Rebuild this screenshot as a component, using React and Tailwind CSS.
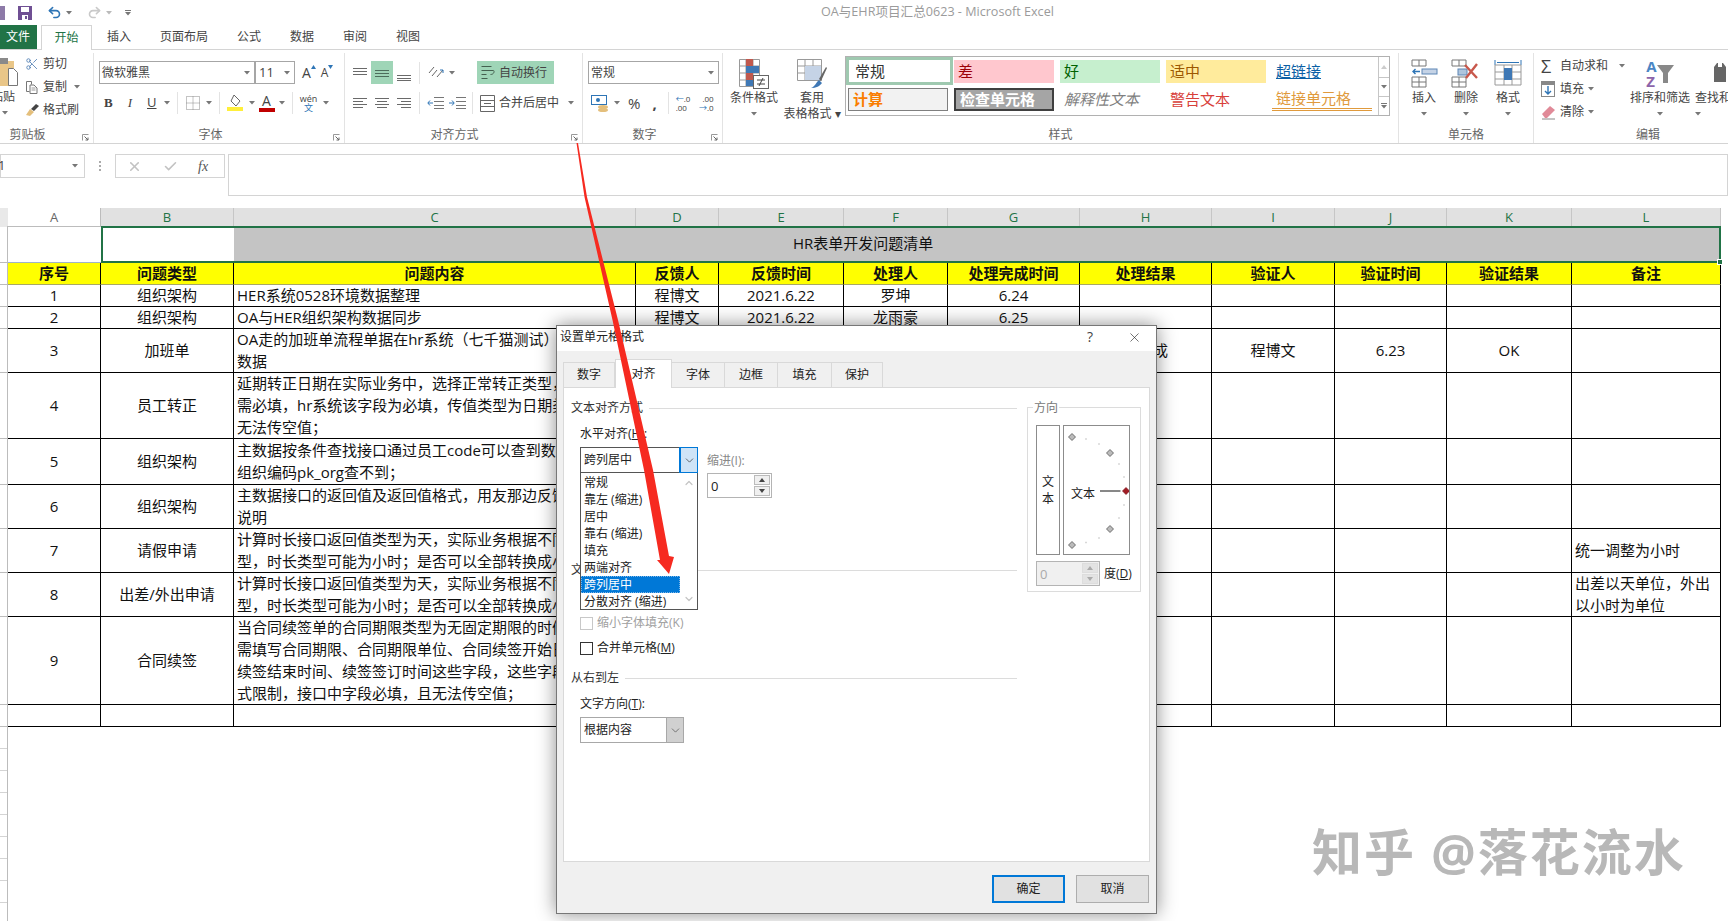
import { Scissors, Undo2, Redo2, X, Check, ChevronDown, ChevronUp } from 'lucide-react'

const GRID = 'grid grid-cols-[8px_93px_133px_402px_83px_125px_104px_132px_132px_123px_112px_125px_149px_7px]'

const COLS = ['A', 'B', 'C', 'D', 'E', 'F', 'G', 'H', 'I', 'J', 'K', 'L']
const HEADERS = ['序号', '问题类型', '问题内容', '反馈人', '反馈时间', '处理人', '处理完成时间', '处理结果', '验证人', '验证时间', '验证结果', '备注']

const CONTRACT_LINES = ['计算时长接口返回值类型为天，实际业务根据不同', '型，时长类型可能为小时；是否可以全部转换成小']

const ROWS = [
  { h: 'h-[22px]', no: '1', type: '组织架构', lines: ['HER系统0528环境数据整理'], d: '程博文', e: '2021.6.22', f: '罗坤', g: '6.24' },
  { h: 'h-[22px]', no: '2', type: '组织架构', lines: ['OA与HER组织架构数据同步'], d: '程博文', e: '2021.6.22', f: '龙雨豪', g: '6.25' },
  { h: 'h-[44px]', no: '3', type: '加班单', lines: ['OA走的加班单流程单据在hr系统（七千猫测试）', '数据'], h2: '已完成', i: '程博文', j: '6.23', k: 'OK' },
  { h: 'h-[66px]', no: '4', type: '员工转正', lines: ['延期转正日期在实际业务中，选择正常转正类型，', '需必填，hr系统该字段为必填，传值类型为日期类', '无法传空值；'] },
  { h: 'h-[46px]', no: '5', type: '组织架构', lines: ['主数据按条件查找接口通过员工code可以查到数据', '组织编码pk_org查不到；'] },
  { h: 'h-[44px]', no: '6', type: '组织架构', lines: ['主数据接口的返回值及返回值格式，用友那边反馈', '说明'] },
  { h: 'h-[44px]', no: '7', type: '请假申请', lines: CONTRACT_LINES, l: ['统一调整为小时'] },
  { h: 'h-[44px]', no: '8', type: '出差/外出申请', lines: CONTRACT_LINES, l: ['出差以天单位，外出', '以小时为单位'] },
  { h: 'h-[88px]', no: '9', type: '合同续签', lines: ['当合同续签单的合同期限类型为无固定期限的时候', '需填写合同期限、合同期限单位、合同续签开始日', '续签结束时间、续签签订时间这些字段，这些字段', '式限制，接口中字段必填，且无法传空值；'] },
  { h: 'h-[22px]', no: '', type: '', lines: [] },
]

const ALIGN_ITEMS = ['常规', '靠左 (缩进)', '居中', '靠右 (缩进)', '填充', '两端对齐', '跨列居中', '分散对齐 (缩进)']

function Caret({ className = '' }) {
  return (
    <svg width="6" height="4" viewBox="0 0 6 4" className={`shrink-0 ${className}`}>
      <path d="M0 0h6L3 3.5z" fill="#777" />
    </svg>
  )
}

function Launcher() {
  return (
    <svg width="7" height="7" viewBox="0 0 7 7" className="absolute right-[4px] bottom-[2px]">
      <path d="M.5 6.5v-6h6" fill="none" stroke="#999" />
      <path d="M2.5 2.5l3.5 3.5M6 3.5V6H3.5" fill="none" stroke="#666" />
    </svg>
  )
}

function Lines({ rows, size = 16, color = '#6a6a6a' }) {
  return (
    <svg width={size} height={size} viewBox={`0 0 ${size} ${size}`} className="shrink-0">
      {rows.map(([x1, x2, y], i) => (
        <path key={i} d={`M${x1} ${y}H${x2}`} stroke={color} />
      ))}
    </svg>
  )
}

function Group({ className, labelClass = '', label, launcher, children }) {
  return (
    <div className={`relative flex h-[90px] shrink-0 flex-col border-r border-[#e3e3e3] ${className}`}>
      <div className="h-[74px] pt-px">{children}</div>
      <div className={`h-[16px] text-center text-[12px] leading-[16px] whitespace-nowrap text-[#666] ${labelClass}`}>{label}</div>
      {launcher && <Launcher />}
    </div>
  )
}

function BigButton({ className, icon, lines }) {
  return (
    <div className={`flex shrink-0 flex-col items-center pt-[5px] text-[12px] leading-[16px] text-[#444] ${className}`}>
      <div className="flex h-[31px] items-start justify-center">{icon}</div>
      {lines.map((t) => (
        <div key={t} className="whitespace-nowrap">{t}</div>
      ))}
      {lines.length === 1 && <Caret className="mt-[6px]" />}
    </div>
  )
}

function StyleCell({ className, children }) {
  return <div className={`flex h-[23px] w-[100px] items-center pl-[4px] text-[15px] whitespace-nowrap ${className}`}>{children}</div>
}

function Ribbon() {
  return (
    <div className="flex h-[94px] shrink-0 border-b border-[#d4d4d4] bg-white pt-[3px]">
      {/* Clipboard, cut off by the left edge of the picture */}
      <Group className="w-[94px]" labelClass="pr-[38px]" label="剪贴板" launcher>
        <div className="flex h-full">
          <div className="flex w-[25px] flex-col items-start pt-[4px]">
            <svg width="18" height="30" viewBox="0 0 18 30">
              <rect x="-8" y="3" width="22" height="25" fill="#e9c688" />
              <rect x="-2" y="0" width="10" height="6" fill="#8a8a8a" />
              <path d="M8.5 10.5h5l4 4v13h-9z" fill="#fff" stroke="#777" />
            </svg>
            <div className="mt-[2px] w-[15px] overflow-hidden text-[12px] leading-[14px] whitespace-nowrap text-[#444]">
              <span className="float-right">粘贴</span>
            </div>
            <Caret className="mt-[7px] ml-[2px]" />
          </div>
          <div className="flex flex-col gap-[7px] pt-[2px] text-[12px] leading-[16px] text-[#444]">
            <div className="flex items-center gap-[4px]"><Scissors size={14} color="#4b7bb0" strokeWidth={1.4} className="-scale-y-100" />剪切</div>
            <div className="flex items-center gap-[4px]">
              <svg width="14" height="14" viewBox="0 0 14 14"><path d="M1.5 1.5h5v3M1.5 1.5v10h3M5 5h4l3 3v5.5H5z" fill="none" stroke="#777" /><path d="M6.5 8h4M6.5 10h4" stroke="#999" /></svg>
              复制<Caret className="ml-[3px]" />
            </div>
            <div className="flex items-center gap-[2px]">
              <svg width="16" height="14" viewBox="0 0 16 14"><path d="M1 12l4-6 4 3-4 4z" fill="#e4bf7c" /><path d="M6 6l5-5 3 2-5 5z" fill="#444" /></svg>
              格式刷
            </div>
          </div>
        </div>
      </Group>

      {/* Font */}
      <Group className="w-[251px]" labelClass="pr-[17px]" label="字体" launcher>
        <div className="flex flex-col pt-[7px] pl-[5px] text-[#444]">
          <div className="flex items-center">
            <div className="flex h-[23px] w-[196px] items-center border border-[#a6a6a6] text-[12px]">
              <div className="flex h-full w-[156px] items-center justify-between border-r-2 border-[#a6a6a6] pr-[4px] pl-[2px]">微软雅黑<Caret /></div>
              <div className="flex flex-1 items-center justify-between pr-[4px] pl-[3px] text-[13px]">11<Caret /></div>
            </div>
            <div className="ml-[7px] flex items-start text-[14px] leading-[16px]">A<svg width="5" height="4" viewBox="0 0 5 4"><path d="M0 4L2.5 0 5 4z" fill="#2e75b6" /></svg></div>
            <div className="ml-[5px] flex items-start text-[12px] leading-[16px]">A<svg width="5" height="4" viewBox="0 0 5 4"><path d="M0 0h5L2.5 4z" fill="#2e75b6" /></svg></div>
          </div>
          <div className="mt-[8px] flex h-[22px] items-center text-[13px]">
            <span className="ml-[5px] font-bold [font-family:'Liberation_Serif',serif]">B</span>
            <span className="ml-[15px] italic [font-family:'Liberation_Serif',serif]">I</span>
            <span className="ml-[15px] underline">U</span>
            <Caret className="ml-[7px]" />
            <div className="ml-[7px] h-[22px] w-px bg-[#e3e3e3]" />
            <svg width="14" height="14" viewBox="0 0 14 14" className="ml-[8px]"><path d="M.5.5h13v13H.5zM7 .5v13M.5 7h13" fill="none" stroke="#888" strokeDasharray="1 1" /></svg>
            <Caret className="ml-[6px]" />
            <div className="ml-[7px] h-[22px] w-px bg-[#e3e3e3]" />
            <svg width="17" height="18" viewBox="0 0 17 18" className="ml-[7px]"><path d="M7 1l6 6-4 5-5-5z" fill="#fff" stroke="#666" /><rect y="13" width="16" height="4" fill="#ffef3a" /></svg>
            <Caret className="ml-[5px]" />
            <div className="ml-[4px] flex w-[16px] flex-col items-center text-[14px] leading-[14px]">
              <span>A</span>
              <span className="h-[4px] w-[16px] bg-[#c00000]" />
            </div>
            <Caret className="ml-[4px]" />
            <div className="ml-[7px] h-[22px] w-px bg-[#e3e3e3]" />
            <div className="ml-[7px] flex w-[18px] flex-col items-center leading-[9px]">
              <span className="text-[9px]">wén</span>
              <span className="text-[9px] text-[#2e75b6]">文</span>
            </div>
            <Caret className="ml-[5px]" />
          </div>
        </div>
      </Group>

      {/* Alignment */}
      <Group className="w-[238px]" labelClass="pr-[18px]" label="对齐方式" launcher>
        <div className="flex flex-col pt-[7px] pl-[7px] text-[12px] text-[#444]">
          <div className="flex h-[23px] items-center">
            <Lines rows={[[1, 15, 3.5], [1, 15, 6.5], [1, 15, 9.5]]} />
            <div className="ml-[3px] flex h-[23px] w-[22px] items-center justify-center bg-[#9fd5b7]"><Lines rows={[[1, 15, 5.5], [1, 15, 8.5], [1, 15, 11.5]]} color="#4d6e5c" /></div>
            <div className="ml-[3px]"><Lines rows={[[1, 15, 10.5], [1, 15, 13.5], [1, 15, 15.5]]} /></div>
            <div className="ml-[7px] h-[22px] w-px bg-[#e3e3e3]" />
            <svg width="18" height="16" viewBox="0 0 18 16" className="ml-[7px]"><path d="M2 8l5-6M5 11l5-6M10 12l6-7" stroke="#666" fill="none" /><path d="M13 5h3v3" stroke="#2e75b6" fill="none" /></svg>
            <Caret className="ml-[4px]" />
            <div className="ml-[22px] flex h-[23px] w-[77px] items-center gap-[4px] bg-[#9fd5b7] pl-[3px] whitespace-nowrap">
              <svg width="15" height="16" viewBox="0 0 15 16"><path d="M1.5 1.5h10M1.5 5.5h12c1 0 1 4-3 4M1.5 9.5h5M1.5 13.5h6" stroke="#44604f" fill="none" /></svg>
              自动换行
            </div>
          </div>
          <div className="mt-[8px] flex h-[22px] items-center">
            <Lines rows={[[1, 15, 3.5], [1, 11, 6.5], [1, 15, 9.5], [1, 11, 12.5]]} />
            <div className="ml-[6px]"><Lines rows={[[1, 15, 3.5], [3, 13, 6.5], [1, 15, 9.5], [3, 13, 12.5]]} /></div>
            <div className="ml-[6px]"><Lines rows={[[1, 15, 3.5], [5, 15, 6.5], [1, 15, 9.5], [5, 15, 12.5]]} /></div>
            <div className="ml-[7px] h-[22px] w-px bg-[#e3e3e3]" />
            <svg width="17" height="14" viewBox="0 0 17 14" className="ml-[7px]"><path d="M7 1.5h10M7 5.5h10M7 9.5h10M7 12.5h10" stroke="#777" /><path d="M6 7H1M3 4.5L.8 7 3 9.5" stroke="#2e75b6" fill="none" /></svg>
            <svg width="17" height="14" viewBox="0 0 17 14" className="ml-[5px]"><path d="M7 1.5h10M7 5.5h10M7 9.5h10M7 12.5h10" stroke="#777" /><path d="M0 7h5M3 4.5L5.2 7 3 9.5" stroke="#2e75b6" fill="none" /></svg>
            <div className="ml-[6px] h-[22px] w-px bg-[#e3e3e3]" />
            <svg width="15" height="17" viewBox="0 0 15 17" className="ml-[7px]"><path d="M.5.5h14v16H.5zM.5 5.5h14M.5 11.5h14M4 8.5h7" fill="none" stroke="#666" /></svg>
            <span className="ml-[4px] whitespace-nowrap">合并后居中</span>
            <Caret className="ml-[9px]" />
          </div>
        </div>
      </Group>

      {/* Number */}
      <Group className="w-[140px]" labelClass="pr-[16px]" label="数字" launcher>
        <div className="flex flex-col pt-[7px] pl-[5px] text-[12px] text-[#444]">
          <div className="flex h-[23px] w-[131px] items-center justify-between border border-[#a6a6a6] pr-[4px] pl-[2px]">常规<Caret /></div>
          <div className="mt-[8px] flex h-[22px] items-center">
            <svg width="18" height="17" viewBox="0 0 18 17" className="ml-[3px]"><rect x=".5" y=".5" width="15" height="9" fill="#fff" stroke="#2e75b6" /><circle cx="7" cy="5" r="2" fill="#2e75b6" /><ellipse cx="12" cy="12" rx="5" ry="2" fill="#e4bf7c" /><ellipse cx="12" cy="15" rx="5" ry="2" fill="#e4bf7c" /></svg>
            <Caret className="ml-[5px]" />
            <span className="ml-[8px] text-[15px]">%</span>
            <span className="ml-[12px] text-[15px] font-bold">,</span>
            <div className="ml-[11px] h-[22px] w-px bg-[#e3e3e3]" />
            <div className="ml-[7px] flex w-[16px] flex-col text-[8px] leading-[9px]"><span><span className="text-[#2e75b6]">←</span>.0</span><span>.00</span></div>
            <div className="ml-[6px] flex w-[16px] flex-col text-right text-[8px] leading-[9px]"><span>.00</span><span><span className="text-[#2e75b6]">→</span>.0</span></div>
          </div>
        </div>
      </Group>

      {/* Styles */}
      <Group className="w-[676px]" label="样式">
        <div className="flex">
          <BigButton
            className="ml-[5px] w-[52px]"
            lines={['条件格式']}
            icon={
              <svg width="30" height="30" viewBox="0 0 30 30">
                <path d="M.5.5h20v27H.5zM7 .5v27M14 .5v27M.5 7h20M.5 14h20M.5 21h20" fill="none" stroke="#999" />
                <rect x="7" y="0" width="7" height="7" fill="#c0584d" />
                <rect x="7" y="7" width="13" height="7" fill="#3f78b5" />
                <rect x="7" y="14" width="7" height="7" fill="#c0584d" />
                <rect x="7" y="21" width="7" height="6" fill="#3f78b5" />
                <rect x="14.5" y="16.5" width="15" height="13" fill="#fff" stroke="#666" />
                <path d="M18 21h8M18 25h8M24 19l-4 8" stroke="#444" fill="none" />
              </svg>
            }
          />
          <BigButton
            className="ml-[3px] w-[58px]"
            lines={['套用', '表格格式 ▾']}
            icon={
              <svg width="30" height="30" viewBox="0 0 30 30">
                <path d="M.5.5h24v21H.5zM.5 7h24M.5 14h24M8 .5v21M16 .5v21" fill="none" stroke="#999" />
                <rect x="8" y="7" width="16" height="14" fill="#c5d3e6" />
                <path d="M14 29c4-1 5-6 8-8l3 3c-2 3-6 5-11 5z" fill="#3f78b5" />
                <path d="M22 20L29 8l1 1-6 13z" fill="#666" />
              </svg>
            }
          />
          <div className="mt-[2px] ml-[4px] flex h-[60px] w-[545px] justify-between border border-[#b1b1b1] text-[#333]">
            <div className="grid grid-cols-[106px_106px_106px_106px_106px] content-start pt-[3px] pl-[2px]">
              <div className="-mt-[3px] -ml-[2px] flex h-[28px] w-[107px] items-center border-[3px] border-[#9fc9b0] pl-[6px] text-[15px]">常规</div>
              <StyleCell className="bg-[#ffc7ce] text-[#9c0006]">差</StyleCell>
              <StyleCell className="bg-[#c6efce] text-[#006100]">好</StyleCell>
              <StyleCell className="bg-[#ffeb9c] text-[#9c5700]">适中</StyleCell>
              <StyleCell className="text-[#0b5fa5] underline">超链接</StyleCell>
              <StyleCell className="mt-[3px] border border-[#7f7f7f] bg-[#f2f2f2] font-bold text-[#fa7d00]">计算</StyleCell>
              <StyleCell className="mt-[3px] border-2 border-[#3f3f3f] bg-[#a5a5a5] font-bold text-white">检查单元格</StyleCell>
              <StyleCell className="mt-[3px] text-[#7f7f7f] italic">解释性文本</StyleCell>
              <StyleCell className="mt-[3px] text-[#d8403a]">警告文本</StyleCell>
              <StyleCell className="mt-[3px] border-b-[3px] border-double border-[#e09a3c] text-[#e09a3c]">链接单元格</StyleCell>
            </div>
            <div className="flex w-[14px] flex-col border-l border-[#c6c6c6]">
              <div className="flex h-[21px] items-center justify-center border-b border-[#c6c6c6]"><svg width="6" height="4" viewBox="0 0 6 4"><path d="M0 4L3 0l3 4z" fill="#ccc" /></svg></div>
              <div className="flex h-[19px] items-center justify-center border-b border-[#c6c6c6]"><Caret /></div>
              <div className="flex flex-1 flex-col items-center justify-center gap-[1px]"><span className="h-px w-[6px] bg-[#777]" /><Caret /></div>
            </div>
          </div>
        </div>
      </Group>

      {/* Cells */}
      <Group className="w-[135px]" label="单元格">
        <div className="flex pl-[4px]">
          <BigButton
            className="w-[42px]"
            lines={['插入']}
            icon={
              <svg width="27" height="30" viewBox="0 0 27 30">
                <path d="M1 1h14v6H1zM8 1v6M1 18h14v10H1zM1 23h14M8 18v10" fill="none" stroke="#777" />
                <rect x="11" y="10" width="15" height="5" fill="#c5d3e6" stroke="#5c86b5" />
                <path d="M9 12.5H2M4.5 10L2 12.5 4.5 15" fill="none" stroke="#2e75b6" strokeWidth="1.4" />
              </svg>
            }
          />
          <BigButton
            className="w-[42px]"
            lines={['删除']}
            icon={
              <svg width="30" height="30" viewBox="0 0 30 30">
                <path d="M1 1h14v6H1zM8 1v6M1 18h14v10H1zM1 23h14M8 18v10" fill="none" stroke="#777" />
                <rect x="7" y="10" width="9" height="6" fill="#aec5dd" stroke="#5c86b5" />
                <path d="M14 6l12 13M26 5L15 19" stroke="#c8584c" strokeWidth="2.4" />
              </svg>
            }
          />
          <BigButton
            className="w-[42px]"
            lines={['格式']}
            icon={
              <svg width="28" height="30" viewBox="0 0 28 30">
                <path d="M1 1v5M27 1v5M3 3.5h22" stroke="#2e75b6" fill="none" />
                <path d="M1 6h26v20H1zM10 6v20M18 6v20M1 13h26M1 20h26" fill="none" stroke="#999" />
                <rect x="10" y="9" width="8" height="12" fill="#3f78b5" />
              </svg>
            }
          />
        </div>
      </Group>

      {/* Editing, cut off by the right edge */}
      <Group className="w-[194px] border-r-0" labelClass="pl-[34px]" label="编辑">
        <div className="flex">
          <div className="ml-[7px] flex w-[87px] shrink-0 flex-col gap-[7px] pt-[4px] text-[12px] leading-[16px] text-[#444]">
            <div className="flex items-center gap-[4px]">
              <span className="w-[15px] text-[18px] leading-[16px] text-[#444]">Σ</span>自动求和<Caret className="ml-[7px]" />
            </div>
            <div className="flex items-center gap-[4px]">
              <svg width="15" height="16" viewBox="0 0 15 16"><rect x=".5" y=".5" width="13" height="15" fill="#fff" stroke="#888" /><rect x="1" y="1" width="12" height="3" fill="#888" /><path d="M7 5v8M4 10l3 3 3-3" fill="none" stroke="#2e75b6" strokeWidth="1.4" /></svg>
              填充<Caret />
            </div>
            <div className="flex items-center gap-[4px]">
              <svg width="15" height="16" viewBox="0 0 15 16"><path d="M1 10l8-8 5 4-8 8H4z" fill="#e08a98" /><path d="M1 15h13" stroke="#888" /></svg>
              清除<Caret />
            </div>
          </div>
          <BigButton
            className="w-[64px]"
            lines={['排序和筛选']}
            icon={
              <div className="flex items-center">
                <div className="flex flex-col text-[15px] leading-[15px] font-bold">
                  <span className="text-[#4a86c5]">A</span>
                  <span className="text-[#8d64aa]">Z</span>
                </div>
                <svg width="17" height="20" viewBox="0 0 17 20"><path d="M0 1h17l-6 8v10H6V9z" fill="#888" /></svg>
              </div>
            }
          />
          <BigButton
            className="ml-[3px] w-[33px] items-start overflow-hidden"
            lines={['查找和选择']}
            icon={
              <svg width="30" height="30" viewBox="0 0 30 30" className="ml-[1px]"><path d="M18 23V8l3-4h1v4h4V4h1l3 4v15z" fill="#666" /></svg>
            }
          />
        </div>
      </Group>
    </div>
  )
}

function FormulaBar() {
  return (
    <div className="flex h-[63px] shrink-0 items-start bg-white pt-[10px]">
      <div className="flex h-[24px] w-[85px] items-center justify-between border border-[#d4d4d4] pr-[6px] text-[13px] text-[#444]">
        <span className="-ml-[3px]">1</span><Caret />
      </div>
      <div className="flex h-[24px] w-[30px] flex-col items-center justify-center gap-[2px]">
        <span className="h-[2px] w-[2px] bg-[#aaa]" /><span className="h-[2px] w-[2px] bg-[#aaa]" /><span className="h-[2px] w-[2px] bg-[#aaa]" />
      </div>
      <div className="flex h-[24px] w-[110px] items-center border border-[#d4d4d4]">
        <X size={15} color="#c2c2c2" strokeWidth={2.5} className="ml-[11px]" />
        <Check size={15} color="#c2c2c2" strokeWidth={2.5} className="ml-[21px]" />
        <span className="ml-[20px] font-['Liberation_Serif',serif] text-[14px] text-[#555] italic">fx</span>
      </div>
      <div className="ml-[3px] h-[42px] flex-1 border border-[#d4d4d4]" />
    </div>
  )
}

function TextCell({ children }) {
  return (
    <div className="flex items-center justify-center overflow-hidden border-r border-b border-black pb-[2px] whitespace-nowrap">
      {children}
    </div>
  )
}

function Sheet() {
  return (
    <div className="relative flex min-h-0 flex-1 flex-col overflow-hidden pt-px text-[15px] leading-[22px] text-[#111]">
      {/* column letters */}
      <div className={`${GRID} h-[18px] shrink-0 text-[13px] leading-[18px]`}>
        <div className="bg-[#e9e9e9]" />
        {COLS.map((c, i) => (
          <div
            key={c}
            className={
              i === 0
                ? 'border-r border-b border-[#bcbcbc] bg-white text-center text-[#666]'
                : 'border-r border-[#c6c6c6] bg-[#e1e1e1] text-center text-[#217346]'
            }
          >
            {c}
          </div>
        ))}
      </div>

      {/* merged title row with the cell selection round it */}
      <div className={`${GRID} h-[37px] shrink-0`}>
        <div className="border-r border-b border-[#bcbcbc]" />
        <div className="border-b border-[#9fb4c8]" />
        <div className="relative col-span-11 flex border-2 border-[#217346] bg-white">
          <div className="w-[131px] shrink-0 bg-white" />
          <div className="flex flex-1 items-center bg-[#c4c4c4] pb-[3px] pl-[559px] whitespace-nowrap">HR表单开发问题清单</div>
          <div className="absolute -right-[4px] -bottom-[4px] h-[6px] w-[6px] border border-white bg-[#217346]" />
        </div>
      </div>

      {/* header row */}
      <div className={`${GRID} h-[22px] shrink-0 leading-[20px] font-bold`}>
        <div className="border-r border-b border-[#bcbcbc]" />
        {HEADERS.map((t) => (
          <div key={t} className="border-r border-b border-r-black border-b-[#a8a866] bg-[#ffff00] text-center whitespace-nowrap">
            {t}
          </div>
        ))}
      </div>

      {ROWS.map((r) => (
        <div key={r.no} className={`${GRID} ${r.h} shrink-0`}>
          <div className="border-r border-b border-[#bcbcbc]" />
          <TextCell>{r.no}</TextCell>
          <TextCell>{r.type}</TextCell>
          <div className="flex flex-col justify-center overflow-hidden border-r border-b border-black pb-[2px] pl-[3px] whitespace-nowrap">
            {r.lines.map((line, i) => (
              <div key={i}>{line}</div>
            ))}
          </div>
          <TextCell>{r.d}</TextCell>
          <TextCell>{r.e}</TextCell>
          <TextCell>{r.f}</TextCell>
          <TextCell>{r.g}</TextCell>
          <TextCell>{r.h2}</TextCell>
          <TextCell>{r.i}</TextCell>
          <TextCell>{r.j}</TextCell>
          <TextCell>{r.k}</TextCell>
          <div className="flex flex-col justify-center overflow-hidden border-r border-b border-black pb-[2px] pl-[3px] whitespace-nowrap">
            {r.l && r.l.map((line) => <div key={line}>{line}</div>)}
          </div>
        </div>
      ))}

      {/* row headers keep going under the table */}
      <div className="flex w-[8px] flex-1 flex-col border-r border-[#bcbcbc]">
        {[0, 1, 2, 3, 4, 5, 6, 7, 8].map((n) => (
          <div key={n} className="h-[22px] shrink-0 border-b border-[#d4d4d4]" />
        ))}
      </div>
    </div>
  )
}

function Check2({ disabled, children }) {
  return (
    <div className={`flex h-[14px] items-center gap-[4px] text-[12px] ${disabled ? 'text-[#a0a0a0]' : 'text-[#222]'}`}>
      <span className={`h-[13px] w-[13px] border ${disabled ? 'border-[#c8c8c8]' : 'border-[#333]'}`} />
      <span>{children}</span>
    </div>
  )
}

function SectionLabel({ children }) {
  return (
    <div className="flex h-[14px] items-center gap-[6px] text-[12px] leading-[14px] whitespace-nowrap text-[#333]">
      {children}
      <div className="h-px flex-1 bg-[#dcdcdc]" />
    </div>
  )
}

function AlignDropdown() {
  return (
    <div className="absolute top-[26px] left-0 z-10 flex h-[137px] w-[118px] border border-t-0 border-[#555] bg-white text-[12px] leading-[17px] text-[#222]">
      <div className="flex-1 pt-px">
        {ALIGN_ITEMS.map((t) => (
          <div
            key={t}
            className={
              t === '跨列居中'
                ? 'h-[17px] border border-dotted border-[#7db5e8] bg-[#0078d7] pl-[2px] leading-[15px] whitespace-nowrap text-white'
                : 'h-[17px] pl-[3px] whitespace-nowrap'
            }
          >
            {t}
          </div>
        ))}
      </div>
      <div className="flex w-[17px] flex-col items-center justify-between py-[4px]">
        <ChevronUp size={12} color="#c4c4c4" strokeWidth={2.4} />
        <ChevronDown size={12} color="#c4c4c4" strokeWidth={2.4} />
      </div>
    </div>
  )
}

function Spin({ dim }) {
  const fill = dim ? '#aaa' : '#444'
  return (
    <div className="flex w-[16px] flex-col gap-px">
      <div className={`flex h-[10px] items-center justify-center border ${dim ? 'border-[#ddd] bg-[#e3e3e3]' : 'border-[#bbb] bg-[#f0f0f0]'}`}>
        <svg width="6" height="4" viewBox="0 0 6 4"><path d="M0 4L3 0l3 4z" fill={fill} /></svg>
      </div>
      <div className={`flex h-[10px] items-center justify-center border ${dim ? 'border-[#ddd] bg-[#e3e3e3]' : 'border-[#bbb] bg-[#f0f0f0]'}`}>
        <svg width="6" height="4" viewBox="0 0 6 4"><path d="M0 0h6L3 4z" fill={fill} /></svg>
      </div>
    </div>
  )
}

function Dial() {
  const big = [[8, 11, '#bbb'], [46, 27, '#bbb'], [46, 103, '#bbb'], [8, 119, '#bbb'], [62, 65, '#a11c24']]
  const small = [[22, 13], [35, 18], [55, 38], [60, 51], [60, 79], [55, 92], [35, 112], [22, 116.5]]
  return (
    <svg width="65" height="128" viewBox="0 0 65 128">
      {small.map(([x, y]) => (
        <rect key={`${x}-${y}`} x={x - 0.75} y={y - 0.75} width="1.5" height="1.5" fill="#ccc" />
      ))}
      {big.map(([x, y, c]) => (
        <path key={`${x}-${y}`} d={`M${x} ${y - 3.5}l3.5 3.5-3.5 3.5-3.5-3.5z`} fill={c} stroke={c === '#bbb' ? '#444' : '#7a1018'} strokeWidth=".7" />
      ))}
      <path d="M36 65h20.5" stroke="#111" />
      <text x="7" y="72" fontSize="12" fill="#222">文本</text>
    </svg>
  )
}

function Dialog() {
  const tabs = [
    ['数字', 'w-[52px]'],
    ['对齐', 'w-[57px]'],
    ['字体', 'w-[53px]'],
    ['边框', 'w-[53px]'],
    ['填充', 'w-[54px]'],
    ['保护', 'w-[51px]'],
  ]
  return (
    <div className="absolute top-[325px] left-[556px] z-20 flex h-[589px] w-[601px] flex-col border border-[#777] bg-[#f0f0f0] text-[12px] leading-[14px] text-[#222] shadow-[0_0_18px_rgba(0,0,0,0.45)]">
      <div className="flex h-[25px] shrink-0 items-center justify-between bg-white pr-[14px] pb-[3px] pl-[3px]">
        <span className="whitespace-nowrap">设置单元格格式</span>
        <div className="flex items-center gap-[34px]">
          <span className="text-[14px] text-[#444]">?</span>
          <X size={15} strokeWidth={1} color="#222" />
        </div>
      </div>

      <div className="flex h-[36px] shrink-0 items-end pl-[6px]">
        {tabs.map(([t, w]) =>
          t === '对齐' ? (
            <div key={t} className={`${w} z-10 -mb-px flex h-[29px] items-center justify-center border-x border-t border-[#d9d9d9] bg-white`}>{t}</div>
          ) : (
            <div key={t} className={`${w} flex h-[25px] items-center justify-center border-t border-r border-[#d9d9d9] first:border-l`}>{t}</div>
          ),
        )}
      </div>

      <div className="mx-[6px] flex h-[475px] shrink-0 gap-[10px] border border-[#d9d9d9] bg-white pt-[13px] pl-[7px]">
        <div className="flex w-[446px] shrink-0 flex-col">
          <SectionLabel>文本对齐方式</SectionLabel>

          <div className="mt-[12px] ml-[9px]">水平对齐(<span className="underline">H</span>):</div>
          <div className="mt-[6px] ml-[9px] flex items-start">
            <div className="relative w-[118px]">
              <div className="flex h-[26px] items-center justify-between border border-[#555] pl-[3px]">
                跨列居中
                <div className="flex h-full w-[17px] items-center justify-center border-l border-[#0078d7] bg-[#cfe4f7] outline outline-[#0078d7]">
                  <ChevronDown size={13} strokeWidth={1.2} color="#222" />
                </div>
              </div>
              <AlignDropdown />
            </div>
            <div className="ml-[9px] flex flex-col pt-[7px] text-[#888]">
              <div>缩进(I):</div>
              <div className="mt-[5px] flex h-[25px] w-[65px] items-center justify-between border border-[#b4b4b4] pr-[1px] pl-[3px] text-[13px] text-[#222]">
                0<Spin />
              </div>
            </div>
          </div>

          <div className="mt-[65px]"><SectionLabel>文本控制</SectionLabel></div>
          <div className="mt-[39px] ml-[9px]"><Check2 disabled>缩小字体填充(K)</Check2></div>
          <div className="mt-[11px] ml-[9px]"><Check2>合并单元格(<span className="underline">M</span>)</Check2></div>

          <div className="mt-[16px]"><SectionLabel>从右到左</SectionLabel></div>
          <div className="mt-[12px] ml-[9px]">文字方向(<span className="underline">T</span>):</div>
          <div className="mt-[6px] ml-[9px] flex h-[26px] w-[104px] items-center justify-between border border-[#a8a8a8] pl-[3px]">
            根据内容
            <div className="flex h-full w-[17px] items-center justify-center border-l border-[#a8a8a8] bg-[#d0d0d0]">
              <ChevronDown size={13} strokeWidth={1.2} color="#444" />
            </div>
          </div>
        </div>

        {/* Orientation group */}
        <div className="relative mt-[6px] h-[185px] w-[114px] shrink-0 border border-[#dcdcdc] pt-[17px] pl-[8px]">
          <span className="absolute -top-[7px] left-[5px] bg-white px-px text-[#777]">方向</span>
          <div className="flex gap-[3px]">
            <div className="flex h-[130px] w-[24px] flex-col items-center justify-center border border-[#8c8c8c] leading-[17px]">
              <span>文</span>
              <span>本</span>
            </div>
            <div className="h-[130px] w-[67px] border border-[#8c8c8c]"><Dial /></div>
          </div>
          <div className="mt-[6px] flex items-center">
            <div className="flex h-[25px] w-[64px] items-center justify-between border border-[#b4b4b4] bg-[#f0f0f0] pr-[1px] pl-[3px] text-[13px] text-[#aaa]">
              0<Spin dim />
            </div>
            <span className="ml-[4px] whitespace-nowrap">度(<span className="underline">D</span>)</span>
          </div>
        </div>
      </div>

      <div className="flex justify-end gap-[11px] pt-[13px] pr-[7px]">
        <div className="flex h-[28px] w-[73px] items-center justify-center border-2 border-[#0078d7] bg-[#e1e1e1]">确定</div>
        <div className="flex h-[28px] w-[73px] items-center justify-center border border-[#adadad] bg-[#e1e1e1]">取消</div>
      </div>
    </div>
  )
}

export default function App() {
  return (
    <div className="relative flex h-[921px] w-[1728px] flex-col overflow-hidden bg-white [font-family:'Open_Sans','Noto_Sans_CJK_SC',sans-serif]">
      {/* quick access + window title */}
      <div className="relative flex h-[25px] shrink-0 items-center">
        <div className="h-[14px] w-[5px] bg-[#8d7aa8]" />
        <svg width="14" height="14" viewBox="0 0 14 14" className="ml-[13px]">
          <path d="M0 0h14v14H0z" fill="#6f4f93" />
          <path d="M3 1h8v5H3z" fill="#fff" />
          <path d="M4 9h6v5H4z" fill="#fff" />
          <path d="M7 10h2v3H7z" fill="#6f4f93" />
        </svg>
        <Undo2 size={15} color="#2e75b6" strokeWidth={2.6} className="ml-[15px]" />
        <Caret className="ml-[4px]" />
        <Redo2 size={15} color="#c9c9c9" strokeWidth={2.6} className="ml-[15px]" />
        <Caret className="ml-[4px] opacity-50" />
        <div className="ml-[13px] flex flex-col items-center gap-px">
          <span className="h-px w-[6px] bg-[#777]" />
          <Caret />
        </div>
        <div className="ml-[690px] text-[12.6px] whitespace-nowrap text-[#9b9b9b]">OA与EHR项目汇总0623 - Microsoft Excel</div>
      </div>

      {/* ribbon tabs */}
      <div className="flex h-[25px] shrink-0 items-stretch border-b border-[#d4d4d4] text-[12px] text-[#444]">
        <div className="flex w-[37px] items-center justify-end bg-[#217346] pr-[7px] whitespace-nowrap text-white">文件</div>
        <div className="ml-[4px] -mb-px flex w-[51px] items-center justify-center border-x border-t border-[#d4d4d4] bg-white text-[#217346]">开始</div>
        <div className="flex w-[54px] items-center justify-center">插入</div>
        <div className="flex w-[76px] items-center justify-center">页面布局</div>
        <div className="flex w-[54px] items-center justify-center">公式</div>
        <div className="flex w-[52px] items-center justify-center">数据</div>
        <div className="flex w-[54px] items-center justify-center">审阅</div>
        <div className="flex w-[52px] items-center justify-center">视图</div>
      </div>

      <Ribbon />
      <FormulaBar />
      <Sheet />
      <Dialog />

      {/* red annotation arrow drawn over the screenshot */}
      <svg width="1728" height="921" viewBox="0 0 1728 921" className="pointer-events-none absolute top-0 left-0 z-30">
        <path
          d="M576.5 143L584.5 197L612.5 320L644 470L660 560L657 560L669 574L674 557L669 556L653 470L618 320L587 197L578 143z"
          fill="#f62a20"
        />
      </svg>

      {/* site watermark */}
      <div className="absolute top-[822px] left-[1312px] z-10 text-[50px] leading-[60px] font-bold tracking-[2px] whitespace-nowrap text-[#b8b8b8]">
        知乎 @落花流水
      </div>
    </div>
  )
}
